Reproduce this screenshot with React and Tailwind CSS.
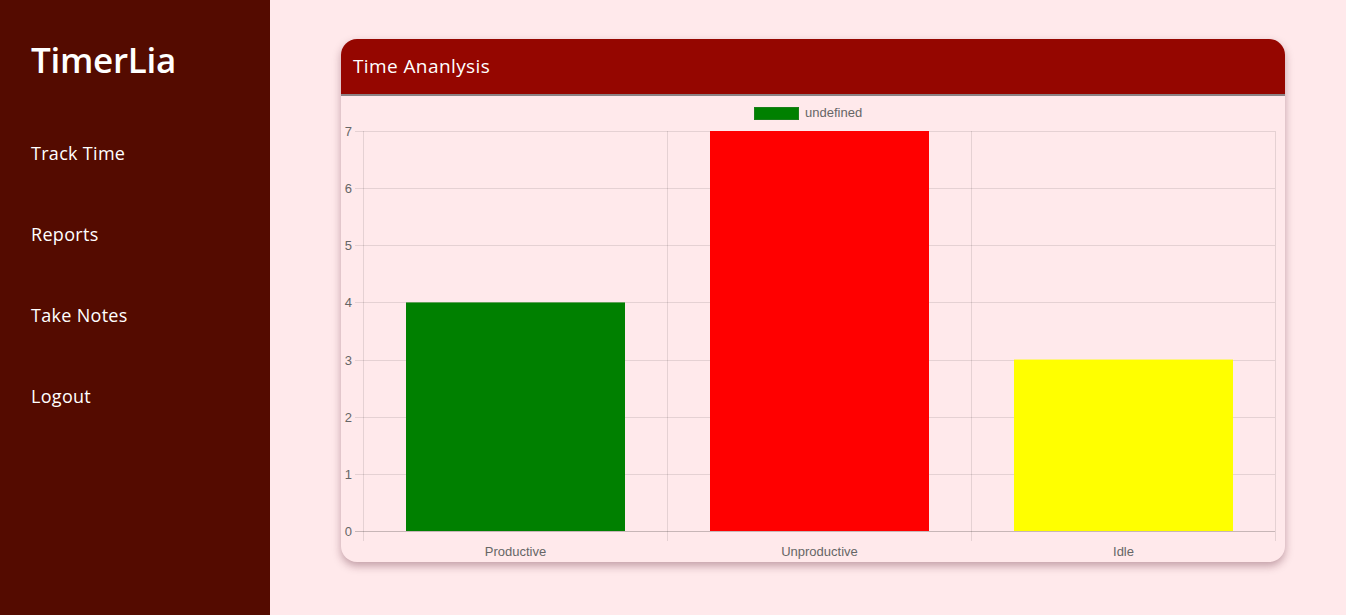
import React from 'react';

const navItems = ['Track Time', 'Reports', 'Take Notes', 'Logout'];

const bars = [
  { label: 'Productive', value: 4, color: '#008000' },
  { label: 'Unproductive', value: 7, color: '#ff0000' },
  { label: 'Idle', value: 3, color: '#ffff00' },
];

const TOP = 35;
const BOTTOM = 435;
const yFor = (v) => BOTTOM - (v * (BOTTOM - TOP)) / 7;

const Chart = () => (
  <svg width="944" height="466" className="block" style={{ fontFamily: '"Liberation Sans", Arial, sans-serif' }}>
    {/* legend */}
    <rect x="413.5" y="11.5" width="44" height="12" fill="#008000" stroke="#1a7f1a" />
    <text x="464" y="21" fontSize="13" fill="#666">undefined</text>

    {/* horizontal grid */}
    {[0, 1, 2, 3, 4, 5, 6, 7].map((v) => (
      <g key={v}>
        <line
          x1="14"
          x2="934"
          y1={Math.round(yFor(v)) + 0.5}
          y2={Math.round(yFor(v)) + 0.5}
          stroke={v === 0 ? 'rgba(0,0,0,0.22)' : 'rgba(0,0,0,0.1)'}
        />
        <text x="11" y={Math.round(yFor(v)) + 5} fontSize="13" fill="#666" textAnchor="end">
          {v}
        </text>
      </g>
    ))}

    {/* vertical grid */}
    {[22, 326, 630, 934].map((x) => (
      <line key={x} x1={x + 0.5} x2={x + 0.5} y1={TOP} y2="445" stroke="rgba(0,0,0,0.1)" />
    ))}

    {/* bars */}
    {bars.map((b, i) => {
      const x = 65 + i * 304;
      const y = yFor(b.value);
      return (
        <g key={b.label}>
          <rect x={x} y={y} width="219" height={BOTTOM - y} fill={b.color} />
          <text x={x + 109.5} y="460" fontSize="13" fill="#666" textAnchor="middle">
            {b.label}
          </text>
        </g>
      );
    })}
  </svg>
);

export default function App() {
  return (
    <div className="flex h-[615px] w-full bg-[#ffe9eb]" style={{ fontFamily: '"Open Sans", Inter, sans-serif' }}>
      {/* Sidebar */}
      <aside className="w-[270px] shrink-0 bg-[#540b00] text-white pl-[31px]">
        <h1 className="pt-[36px] text-[35px] font-semibold leading-[48px] tracking-[-0.3px]">TimerLia</h1>
        <nav className="mt-[57px] flex flex-col gap-[56px]">
          {navItems.map((item) => (
            <a key={item} href="#" className="text-[18px] leading-[25px] tracking-[0.3px]">
              {item}
            </a>
          ))}
        </nav>
      </aside>

      {/* Main */}
      <main className="flex-1 pl-[71px] pr-[61px] pt-[39px]">
        <div className="w-[944px] overflow-hidden rounded-2xl bg-[#ffe9eb] shadow-[0_4px_8px_rgba(80,20,40,0.35)]">
          <div className="flex h-[57px] items-center border-b-2 border-[#8c8385] bg-[#950600] px-3 pb-[1px] text-[19px] tracking-[0.4px] text-white">
            Time Ananlysis
          </div>
          <Chart />
        </div>
      </main>
    </div>
  );
}
